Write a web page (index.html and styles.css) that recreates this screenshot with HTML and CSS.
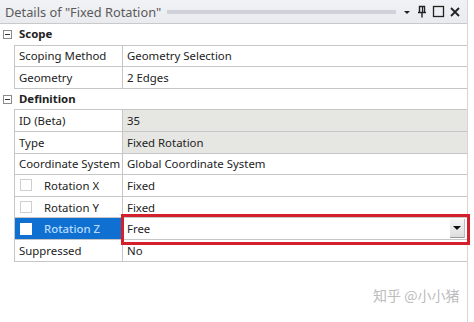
FILE: index.html
```html
<!DOCTYPE html>
<html lang="en">

<head>
    <meta charset="UTF-8">
    <title>Details of "Fixed Rotation"</title>
    <link rel="stylesheet" href="styles.css">
</head>

<body>
    <div class="panel">
        <div class="titlebar">
            <span class="title">Details of "Fixed Rotation"</span>
            <span class="grip"></span>
            <span class="tools">
                <svg width="10" height="10" viewBox="0 0 10 10"><path d="M2 4h6l-3 3z" fill="#222"/></svg>
                <svg width="12" height="14" viewBox="0 0 12 14"><path d="M3.5 1.5h5v6h-5z M2 7.5h8 M6 7.5v5" fill="none" stroke="#222" stroke-width="1.4"/><path d="M6.5 2v5" stroke="#222" stroke-width="1.2"/></svg>
                <svg width="13" height="13" viewBox="0 0 13 13"><rect x="1.5" y="1.5" width="10" height="10" fill="none" stroke="#222" stroke-width="1.3"/></svg>
                <svg width="12" height="12" viewBox="0 0 12 12"><path d="M2 2l8 8M10 2l-8 8" stroke="#222" stroke-width="1.8"/></svg>
            </span>
        </div>

        <div class="rows">
            <div class="row group">
                <div class="gutter"><span class="toggle"></span></div>
                <div class="heading">Scope</div>
            </div>
            <div class="row prop">
                <div class="gutter"></div>
                <div class="label">Scoping Method</div>
                <div class="value">Geometry Selection</div>
            </div>
            <div class="row prop">
                <div class="gutter"></div>
                <div class="label">Geometry</div>
                <div class="value">2 Edges</div>
            </div>
            <div class="row group">
                <div class="gutter"><span class="toggle"></span></div>
                <div class="heading">Definition</div>
            </div>
            <div class="row prop">
                <div class="gutter"></div>
                <div class="label">ID (Beta)</div>
                <div class="value readonly">35</div>
            </div>
            <div class="row prop">
                <div class="gutter"></div>
                <div class="label">Type</div>
                <div class="value readonly">Fixed Rotation</div>
            </div>
            <div class="row prop">
                <div class="gutter"></div>
                <div class="label">Coordinate System</div>
                <div class="value">Global Coordinate System</div>
            </div>
            <div class="row prop">
                <div class="gutter"></div>
                <div class="label"><span class="check"></span>Rotation X</div>
                <div class="value">Fixed</div>
            </div>
            <div class="row prop">
                <div class="gutter"></div>
                <div class="label"><span class="check"></span>Rotation Y</div>
                <div class="value">Fixed</div>
            </div>
            <div class="row prop">
                <div class="gutter"></div>
                <div class="label selected"><span class="check"></span>Rotation Z</div>
                <div class="value edit">Free<span class="drop"></span></div>
            </div>
            <div class="row prop">
                <div class="gutter"></div>
                <div class="label">Suppressed</div>
                <div class="value">No</div>
            </div>
        </div>

        <div class="highlight"></div>
        <div class="watermark">知乎 @小小猪</div>
    </div>
</body>

</html>
```

FILE: styles.css
```css
body {
    margin: 0;
    background: #ffffff;
    font-family: "Noto Sans", "Noto Sans CJK SC", sans-serif;
    font-size: 11.4px;
    color: #222;
}

.panel {
    position: relative;
    width: 467px;
    height: 322px;
    border-right: 1px solid #d6d6d6;
}

.titlebar {
    display: flex;
    align-items: center;
    height: 23px;
    background: linear-gradient(#f1f2f5, #e9ebef);
    border-bottom: 1px solid #c9c9c9;
    padding-left: 5px;
}

.title {
    font-size: 12.8px;
    color: #5a5a5a;
    white-space: nowrap;
}

.grip {
    flex: 1;
    height: 4px;
    margin: 0 6px 0 6px;
    background-image: radial-gradient(#c3c7ce 0.65px, transparent 0.85px);
    background-size: 2px 2px;
}

.tools {
    display: flex;
    align-items: center;
    gap: 4px;
    padding-right: 6px;
}

.row {
    display: flex;
    height: 21.6px;
    box-sizing: border-box;
}

.gutter {
    width: 14px;
    flex: none;
    display: flex;
    align-items: center;
    justify-content: center;
}

.toggle {
    position: relative;
    width: 7px;
    height: 7px;
    border: 1px solid #8a8a8a;
    background: #fff;
}

.toggle::after {
    content: "";
    position: absolute;
    left: 1px;
    top: 3px;
    width: 5px;
    height: 1px;
    background: #333;
}

.heading {
    flex: 1;
    font-weight: bold;
    padding-left: 5px;
    line-height: 20px;
    border-bottom: 1px solid #c6c6c6;
}

.label,
.value {
    display: flex;
    align-items: center;
    white-space: nowrap;
    border-bottom: 1px solid #c6c6c6;
}

.label {
    width: 109px;
    flex: none;
    padding-left: 4px;
    box-sizing: border-box;
    border-left: 1px solid #c6c6c6;
    border-right: 1px solid #c6c6c6;
}

.value {
    flex: 1;
    padding-left: 4px;
}

.readonly {
    background: #e6e6e3;
}

.check {
    width: 10px;
    height: 10px;
    border: 1px solid #cfcfcf;
    background: #fff;
    margin: 0 12px 0 1px;
}

.selected {
    background: #0f70d2;
    color: #b8dcff;
    font-weight: 500;
}

.selected .check {
    border-color: #ffffff;
}

.edit {
    justify-content: space-between;
    padding-right: 2px;
}

.drop {
    position: relative;
    width: 14px;
    height: 18px;
    background: linear-gradient(#f6f6f6, #dedede);
    border-bottom: 1px solid #9a9a9a;
    border-right: 1px solid #bdbdbd;
}

.drop::after {
    content: "";
    position: absolute;
    left: 3px;
    top: 7px;
    border-left: 4px solid transparent;
    border-right: 4px solid transparent;
    border-top: 4px solid #111;
}

.highlight {
    position: absolute;
    left: 121px;
    top: 214px;
    width: 343px;
    height: 25px;
    border: 3px solid #d4202d;
}

.watermark {
    position: absolute;
    left: 373px;
    top: 285px;
    font-size: 14px;
    color: #bcbcbc;
    font-family: "Noto Sans CJK SC", sans-serif;
}
```
